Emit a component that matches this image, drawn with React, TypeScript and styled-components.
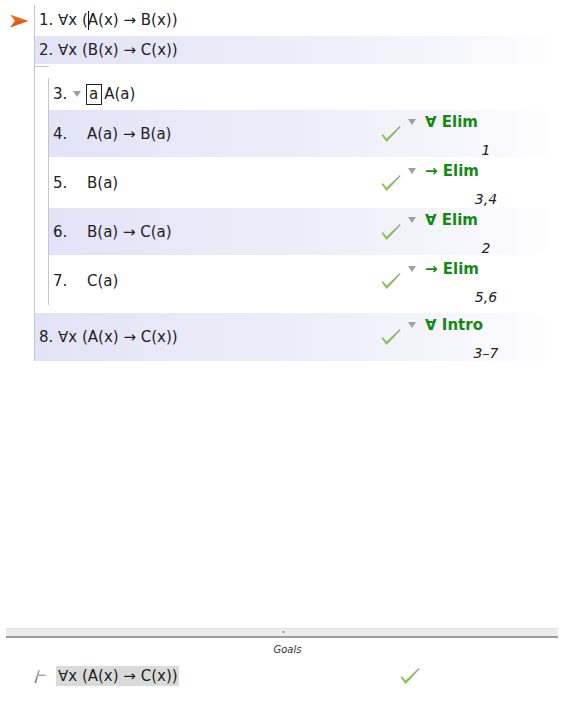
import React from 'react';
import styled, { createGlobalStyle } from 'styled-components';

const GlobalStyle = createGlobalStyle`
  html, body { margin: 0; padding: 0; background: #fff; }
  body { font-family: "DejaVu Sans", Verdana, sans-serif; color: #222; }
  * { box-sizing: border-box; }
`;

const Page = styled.div`
  width: 567px;
  height: 701px;
  display: flex;
  flex-direction: column;
  overflow: hidden;
`;

const ProofArea = styled.div`
  flex: 1;
  display: flex;
  align-items: flex-start;
  padding-top: 5px;
`;

const Gutter = styled.div`
  width: 34px;
  flex: none;
  padding: 8px 0 0 10px;
`;

const Proof = styled.div`
  width: 521px;
  border-left: 1px solid #c6c6c6;
  display: flex;
  flex-direction: column;
  padding-top: 1px;
`;

const shade = `linear-gradient(to right, #e3e3f7 0%, #ebebf9 40%, #f5f5fc 80%, #ffffff 100%)`;

const LineRow = styled.div<{ $shaded?: boolean; $last?: boolean }>`
  height: 28px;
  display: flex;
  align-items: center;
  padding-left: 4px;
  font-size: 15px;
  white-space: pre;
  background: ${(p) => (p.$shaded ? shade : 'transparent')};
  margin-bottom: ${(p) => (p.$last ? 0 : 2)}px;
`;

const SubproofTick = styled.div`
  width: 14px;
  height: 1px;
  background: #c6c6c6;
`;

const Subproof = styled.div`
  margin: 11px 0 0 13px;
  border-left: 1px solid #c6c6c6;
  display: flex;
  flex-direction: column;
  gap: 2px;
  padding: 2px 0 1px;
`;

const RuleRow = styled.div<{ $shaded?: boolean; $tall?: number; $mt?: number }>`
  height: ${(p) => p.$tall ?? 47}px;
  margin-top: ${(p) => p.$mt ?? 0}px;
  display: grid;
  grid-template-columns: 1fr 25px 149px;
  background: ${(p) => (p.$shaded ? shade : 'transparent')};
`;

const Statement = styled.div`
  display: flex;
  align-items: center;
  padding-left: 4px;
  font-size: 15px;
  white-space: pre;
`;

const LineNo = styled.span<{ $w?: number }>`
  display: inline-block;
  width: ${(p) => p.$w ?? 34}px;
`;

const Caret = styled.span`
  display: inline-block;
  width: 1px;
  height: 19px;
  background: #111;
  vertical-align: middle;
  margin-right: -1px;
`;

const Disclosure = styled.span<{ $ml?: number; $mr?: number }>`
  display: inline-block;
  width: 0;
  height: 0;
  border-left: 4.5px solid transparent;
  border-right: 4.5px solid transparent;
  border-top: 6px solid #a0a0a4;
  margin-left: ${(p) => p.$ml ?? 0}px;
  margin-right: ${(p) => p.$mr ?? 0}px;
`;

const BoxedVar = styled.span`
  display: inline-flex;
  align-items: center;
  height: 21px;
  padding: 0 3px 0 2px;
  border: 1px solid #222;
  margin-right: 2px;
`;

const CheckCell = styled.div`
  display: flex;
  align-items: center;
`;

const Justification = styled.div`
  display: flex;
  flex-direction: column;
  padding-top: 3px;
`;

const RuleLine = styled.div`
  display: flex;
  align-items: center;
  height: 18px;
`;

const RuleName = styled.span`
  font-weight: bold;
  font-size: 15px;
  color: #148a14;
  white-space: pre;
`;

const Cites = styled.div`
  margin: 11px 0 0 50px;
  width: 60px;
  text-align: center;
  font-style: italic;
  font-size: 14px;
  line-height: 16px;
  color: #222;
`;

const Bottom = styled.div`
  height: 73px;
  flex: none;
  display: flex;
  flex-direction: column;
`;

const Splitter = styled.div`
  margin-left: 6px;
  width: 552px;
  height: 10px;
  background: #ececec;
  border-top: 1px solid #e0e0e0;
  border-bottom: 2px solid #9c9c9c;
  display: flex;
  justify-content: center;
  padding-top: 2px;
`;

const Grip = styled.span`
  width: 3px;
  height: 2px;
  background: #b0b0b0;
  margin-left: 2px;
`;

const GoalsLabel = styled.div`
  height: 22px;
  display: flex;
  align-items: center;
  justify-content: center;
  font-style: italic;
  font-size: 10px;
  color: #333;
  padding-left: 8px;
`;

const GoalRow = styled.div`
  margin-top: 3px;
  height: 26px;
  display: grid;
  grid-template-columns: 33px 23px 344px 30px;
  align-items: center;
`;

const GoalIcon = styled.div`
  grid-column: 2;
  display: flex;
  align-items: center;
`;

const GoalText = styled.div`
  grid-column: 3;
  justify-self: start;
  font-size: 15px;
  white-space: pre;
  background: #dadada;
  padding: 0 1px 0 2px;
  line-height: 20px;
`;

const GoalCheck = styled.div`
  grid-column: 4;
  display: flex;
  align-items: center;
`;

const Arrow = () => (
  <svg width="19" height="14" viewBox="0 0 19 14">
    <defs>
      <linearGradient id="arr" x1="0" y1="0" x2="0" y2="1">
        <stop offset="0" stopColor="#f07a2c" />
        <stop offset="1" stopColor="#d8480a" />
      </linearGradient>
    </defs>
    <polygon points="0,0.5 18.5,7 0,13.5 5,7" fill="url(#arr)" />
  </svg>
);

let checkId = 0;
const Check = () => {
  const id = `chk${checkId++}`;
  return (
    <svg width="20" height="18" viewBox="0 0 20 18">
      <defs>
        <linearGradient id={id} x1="0" y1="1" x2="1" y2="0">
          <stop offset="0" stopColor="#94c85e" />
          <stop offset="0.6" stopColor="#86b85a" />
          <stop offset="1" stopColor="#9a9aa4" />
        </linearGradient>
      </defs>
      <path d="M0.5 10 L2 9.3 L5.6 13.6 L18.8 1 L19.6 1.9 L6 16.8 L5.2 16.8 Z" fill={`url(#${id})`} />
    </svg>
  );
};

const Turnstile = () => (
  <svg width="13" height="15" viewBox="0 0 13 15">
    <defs>
      <linearGradient id="ts" x1="0" y1="0" x2="0" y2="1">
        <stop offset="0" stopColor="#b8b8bc" />
        <stop offset="1" stopColor="#7a7a80" />
      </linearGradient>
    </defs>
    <path d="M5.2 1 L7 1 L3.2 14 L1.4 14 Z" fill="url(#ts)" />
    <rect x="5" y="5.6" width="7.5" height="1.3" fill="#9a9aa0" />
  </svg>
);

type Rule = { no: string; formula: string; rule: string; cites: string; shaded: boolean };

const subRules: Rule[] = [
  { no: '4.', formula: 'A(a) → B(a)', rule: '∀ Elim', cites: '1', shaded: true },
  { no: '5.', formula: 'B(a)', rule: '→ Elim', cites: '3,4', shaded: false },
  { no: '6.', formula: 'B(a) → C(a)', rule: '∀ Elim', cites: '2', shaded: true },
  { no: '7.', formula: 'C(a)', rule: '→ Elim', cites: '5,6', shaded: false },
];

const JustBlock = ({ rule, cites }: { rule: string; cites: string }) => (
  <Justification>
    <RuleLine>
      <Disclosure $ml={2} $mr={9} />
      <RuleName>{rule}</RuleName>
    </RuleLine>
    <Cites>{cites}</Cites>
  </Justification>
);

export default function App() {
  return (
    <Page>
      <GlobalStyle />
      <ProofArea>
        <Gutter>
          <Arrow />
        </Gutter>
        <Proof>
          <LineRow>
            1. ∀x (<Caret />A(x) → B(x))
          </LineRow>
          <LineRow $shaded>2. ∀x (B(x) → C(x))</LineRow>
          <SubproofTick />
          <Subproof>
            <LineRow $last>
              <LineNo $w={20}>3.</LineNo>
              <Disclosure $mr={5} />
              <BoxedVar>a</BoxedVar>A(a)
            </LineRow>
            {subRules.map((r) => (
              <RuleRow key={r.no} $shaded={r.shaded}>
                <Statement>
                  <LineNo>{r.no}</LineNo>
                  {r.formula}
                </Statement>
                <CheckCell>
                  <Check />
                </CheckCell>
                <JustBlock rule={r.rule} cites={r.cites} />
              </RuleRow>
            ))}
          </Subproof>
          <RuleRow $shaded $tall={48} $mt={8}>
            <Statement>8. ∀x (A(x) → C(x))</Statement>
            <CheckCell>
              <Check />
            </CheckCell>
            <JustBlock rule="∀ Intro" cites="3–7" />
          </RuleRow>
        </Proof>
      </ProofArea>
      <Bottom>
        <Splitter>
          <Grip />
        </Splitter>
        <GoalsLabel>Goals</GoalsLabel>
        <GoalRow>
          <GoalIcon>
            <Turnstile />
          </GoalIcon>
          <GoalText>∀x (A(x) → C(x))</GoalText>
          <GoalCheck>
            <Check />
          </GoalCheck>
        </GoalRow>
      </Bottom>
    </Page>
  );
}
